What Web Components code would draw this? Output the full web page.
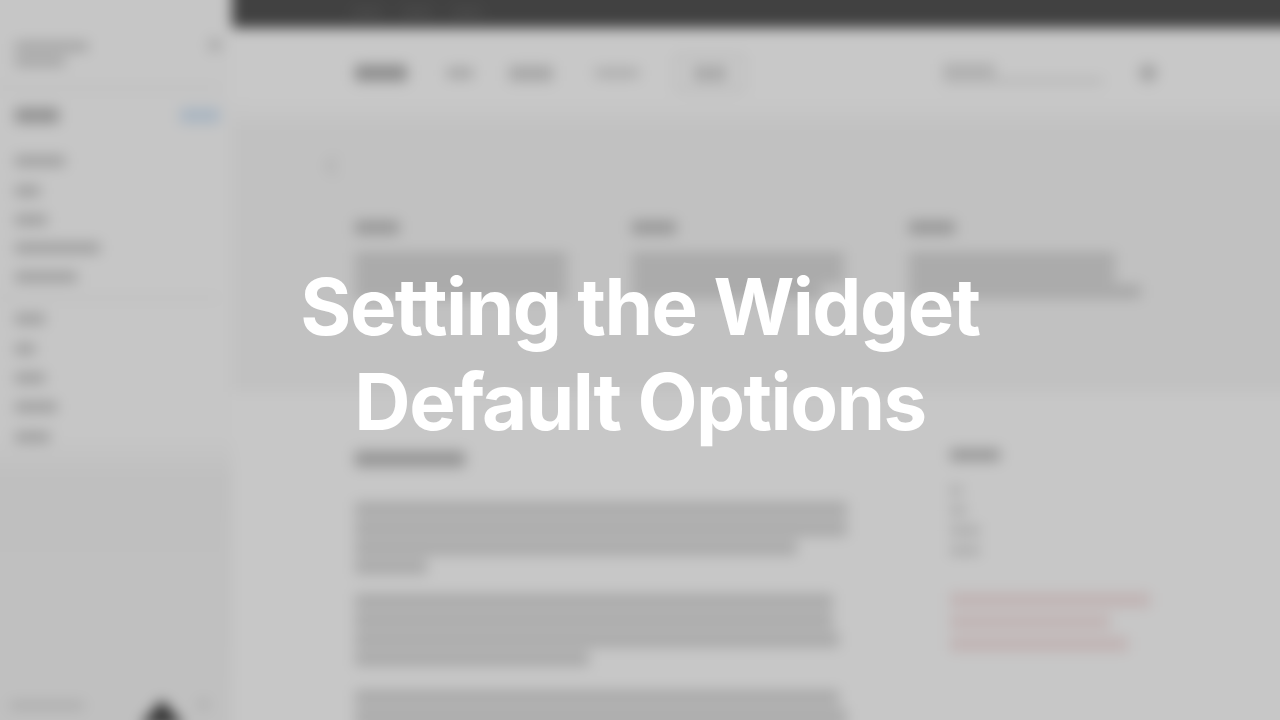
<!DOCTYPE html>
<html lang="en">
<head>
<meta charset="utf-8">
<title>Setting the Widget Default Options</title>
<style>
    html, body { margin: 0; height: 100%; background: #c6c6c6; overflow: hidden; }
</style>
</head>
<body>
<video-frame>
    <!-- Bleed of 24px on the top, left and right so the blur doesn't fade at the window edge -->
    <app-sidebar slot="page">
        <sk-bar w="73" h="9" c="#a0a0a0" mt="66"></sk-bar>
        <sk-bar w="50" h="9" c="#a0a0a0" mt="6"></sk-bar>
        <sk-rule mt="21"></sk-rule>
        <sk-row mt="19">
            <sk-bar w="44" h="15" c="#929292"></sk-bar>
            <sk-bar w="40" h="15" c="#a9b5c1"></sk-bar>
        </sk-row>
        <sk-bar w="50" h="10" c="#9c9c9c" mt="33"></sk-bar>
        <sk-bar w="25" h="10" c="#9c9c9c" mt="20"></sk-bar>
        <sk-bar w="32" h="10" c="#9c9c9c" mt="19"></sk-bar>
        <sk-bar w="85" h="10" c="#9c9c9c" mt="18"></sk-bar>
        <sk-bar w="62" h="10" c="#9c9c9c" mt="19"></sk-bar>
        <sk-rule mt="15"></sk-rule>
        <sk-bar w="30" h="10" c="#9c9c9c" mt="15"></sk-bar>
        <sk-bar w="20" h="10" c="#9c9c9c" mt="20"></sk-bar>
        <sk-bar w="30" h="10" c="#9c9c9c" mt="19"></sk-bar>
        <sk-bar w="42" h="10" c="#9c9c9c" mt="19"></sk-bar>
        <sk-bar w="35" h="10" c="#9c9c9c" mt="20"></sk-bar>
    </app-sidebar>

    <main-column slot="page">
        <top-bar></top-bar>
        <site-header>
            <sk-bar w="52" h="16" c="#8c8c8c"></sk-bar>
            <sk-bar w="26" h="10" c="#a2a2a2" ml="40"></sk-bar>
            <sk-bar w="44" h="15" c="#a6a6a6" ml="36"></sk-bar>
            <sk-bar w="44" h="10" c="#acacac" ml="42"></sk-bar>
            <outline-button></outline-button>
            <search-box></search-box>
        </site-header>
        <hero-steps>
            <step-col><sk-bar w="44" h="13" c="#969696"></sk-bar><text-lines widths="212 212 212" c="#a6a6a6" h="13" gap="3"></text-lines></step-col>
            <step-col><sk-bar w="44" h="13" c="#969696"></sk-bar><text-lines widths="212 212 190" c="#a6a6a6" h="13" gap="3"></text-lines></step-col>
            <step-col><sk-bar w="46" h="13" c="#969696"></sk-bar><text-lines widths="206 206 232" c="#a6a6a6" h="13" gap="3"></text-lines></step-col>
        </hero-steps>
        <article-body>
            <article-main>
                <sk-bar w="110" h="16" c="#959595"></sk-bar>
                <text-lines widths="492 492 442 72" c="#a9a9a9" mt="35" h="15" gap="4"></text-lines>
                <text-lines widths="478 478 484 234" c="#a9a9a9" mt="20" h="15" gap="4"></text-lines>
                <text-lines widths="484 492 492" c="#a9a9a9" mt="24" h="15" gap="4"></text-lines>
            </article-main>
            <article-side>
                <sk-bar w="50" h="12" c="#969696"></sk-bar>
                <sk-bar w="12" h="9" c="#aaaaaa" mt="25"></sk-bar>
                <sk-bar w="16" h="9" c="#aaaaaa" mt="11"></sk-bar>
                <sk-bar w="30" h="9" c="#aaaaaa" mt="11"></sk-bar>
                <sk-bar w="30" h="9" c="#aaaaaa" mt="11"></sk-bar>
                <text-lines widths="200 160 178" c="#c0b2b2" mt="38" h="14" gap="8"></text-lines>
            </article-side>
        </article-body>
    </main-column>

    <span slot="title">Setting the Widget<br>Default Options</span>
</video-frame>

<script>
// Small helper: custom element with its own shadow root from a css + html string
function shadow(el, css, html) {
    el.attachShadow({mode: "open"}).innerHTML = `<style>${css}</style>${html}`;
}

class VideoFrame extends HTMLElement {
    constructor() {
        super();
        shadow(this, `
            :host { display: block; position: relative; width: 1280px; height: 720px; overflow: hidden; }
            .page {
                display: grid;
                grid-template-columns: 256px 1fr;
                width: 1328px;
                height: 768px;
                margin: -24px;
                filter: blur(7px);
            }
            .title {
                position: absolute;
                inset: 0;
                display: flex;
                align-items: center;
                justify-content: center;
                padding-bottom: 12px;
                box-sizing: border-box;
                color: #fff;
                font: 700 78px/95px Inter, "Liberation Sans", sans-serif;
                letter-spacing: -1.55px;
                text-align: center;
            }
        `, `<div class="page"><slot name="page"></slot></div><div class="title"><slot name="title"></slot></div>`);
    }
}

class AppSidebar extends HTMLElement {
    constructor() {
        super();
        shadow(this, `
            :host {
                display: block;
                padding: 0 12px 0 39px;
                background: linear-gradient(#c6c6c6 0, #c6c6c6 460px, #bfbfbf 500px, #c0c0c0 100%);
                position: relative;
            }
            .dot { position: absolute; left: 232px; top: 62px; width: 14px; height: 14px; border-radius: 50%; background: #aaa; }
            .foot { position: absolute; left: 34px; right: 12px; top: 724px; display: flex; align-items: center; height: 10px; }
            .foot i { background: #a8a8a8; height: 7px; width: 74px; }
            .tri { position: absolute; left: 130px; top: 0; border: 22px solid transparent; border-bottom: 26px solid #2e2e2e; border-top: 0; }
            .end { position: absolute; right: 12px; top: 0; width: 9px; height: 9px; background: #a4a4a4; border-radius: 50%; }
        `, `<span class="dot"></span><slot></slot><div class="foot"><i></i><span class="tri"></span><span class="end"></span></div>`);
    }
}

class MainColumn extends HTMLElement {
    constructor() {
        super();
        shadow(this, `:host { display: flex; flex-direction: column; background: #c7c7c7; min-width: 0; }`, `<slot></slot>`);
    }
}

class TopBar extends HTMLElement {
    constructor() {
        super();
        shadow(this, `
            :host { display: flex; align-items: center; gap: 20px; height: 52px; padding: 20px 0 0 120px; box-sizing: border-box; background: #414141; flex: none; }
            i { display: block; width: 30px; height: 4px; background: #555; }
        `, `<i></i><i></i><i></i>`);
    }
}

class SiteHeader extends HTMLElement {
    constructor() {
        super();
        shadow(this, `
            :host { display: flex; align-items: center; height: 96px; padding: 0 0 6px 123px; box-sizing: border-box; flex: none;
                background: linear-gradient(#c8c8c8 0, #c8c8c8 70px, #c3c3c3 96px); }
        `, `<slot></slot>`);
    }
}

class OutlineButton extends HTMLElement {
    constructor() {
        super();
        shadow(this, `
            :host { display: flex; align-items: center; justify-content: center; width: 68px; height: 36px; margin-left: 37px; border: 2px solid #acacac; border-radius: 4px; box-sizing: border-box; }
            i { display: block; width: 34px; height: 15px; background: #a8a8a8; }
        `, `<i></i>`);
    }
}

class SearchBox extends HTMLElement {
    constructor() {
        super();
        shadow(this, `
            :host { display: flex; align-items: center; margin-left: 199px; }
            .field { width: 160px; height: 19px; position: relative; }
            .field i { position: absolute; left: 0; top: 0; width: 52px; height: 13px; background: #aeaeae; }
            .field b { position: absolute; left: 0; right: 0; bottom: 0; height: 4px; background: #acacac; }
            .btn { width: 18px; height: 18px; margin-left: 36px; border-radius: 50%; background: #a2a2a2; }
        `, `<div class="field"><i></i><b></b></div><div class="btn"></div>`);
    }
}

class HeroSteps extends HTMLElement {
    constructor() {
        super();
        shadow(this, `
            :host { display: flex; gap: 65px; height: 268px; padding: 97px 0 0 123px; box-sizing: border-box; background: #c1c1c1; position: relative; flex: none; }
            .back { position: absolute; left: 96px; top: 35px; width: 11px; height: 11px; border-left: 3px solid #a8a8a8; border-bottom: 3px solid #a8a8a8; transform: rotate(45deg); }
        `, `<span class="back"></span><slot></slot>`);
    }
}

class StepCol extends HTMLElement {
    constructor() {
        super();
        shadow(this, `:host { display: flex; flex-direction: column; gap: 19px; width: 212px; }`, `<slot></slot>`);
    }
}

class ArticleBody extends HTMLElement {
    constructor() {
        super();
        shadow(this, `:host { display: flex; padding: 59px 0 0 123px; }`, `<slot></slot>`);
    }
}

class ArticleMain extends HTMLElement {
    constructor() {
        super();
        shadow(this, `:host { display: block; width: 595px; flex: none; }`, `<slot></slot>`);
    }
}

class ArticleSide extends HTMLElement {
    constructor() {
        super();
        shadow(this, `:host { display: block; width: 210px; margin-top: -2px; }`, `<slot></slot>`);
    }
}

// A blurred-out piece of text in the background
class SkBar extends HTMLElement {
    connectedCallback() {
        if (this.shadowRoot) return;
        let a = (n, d) => this.getAttribute(n) || d;
        shadow(this, `:host {
            display: block; flex: none;
            width: ${a("w", 40)}px; height: ${a("h", 8)}px;
            margin-top: ${a("mt", 0)}px; margin-left: ${a("ml", 0)}px;
            background: ${a("c", "#aaa")};
        }`, ``);
    }
}

class SkRow extends HTMLElement {
    connectedCallback() {
        if (this.shadowRoot) return;
        shadow(this, `:host { display: flex; justify-content: space-between; margin-top: ${this.getAttribute("mt") || 0}px; }`, `<slot></slot>`);
    }
}

class SkRule extends HTMLElement {
    connectedCallback() {
        if (this.shadowRoot) return;
        shadow(this, `:host { display: block; height: 2px; margin: ${this.getAttribute("mt") || 0}px 0 0 -24px; background: #b8b8b8; }`, ``);
    }
}

// Paragraph of blurred lines, one bar per width
class TextLines extends HTMLElement {
    connectedCallback() {
        if (this.shadowRoot) return;
        let lines = this.getAttribute("widths").split(" ");
        let bars = lines.map((w) => `<i style="width:${w}px"></i>`).join("");
        let h = this.getAttribute("h") || 11;
        let gap = this.getAttribute("gap") || 6;
        shadow(this, `
            :host { display: flex; flex-direction: column; gap: ${gap}px; margin-top: ${this.getAttribute("mt") || 0}px; }
            i { display: block; height: ${h}px; background: ${this.getAttribute("c")}; }
        `, bars);
    }
}

customElements.define("video-frame", VideoFrame);
customElements.define("app-sidebar", AppSidebar);
customElements.define("main-column", MainColumn);
customElements.define("top-bar", TopBar);
customElements.define("site-header", SiteHeader);
customElements.define("outline-button", OutlineButton);
customElements.define("search-box", SearchBox);
customElements.define("hero-steps", HeroSteps);
customElements.define("step-col", StepCol);
customElements.define("article-body", ArticleBody);
customElements.define("article-main", ArticleMain);
customElements.define("article-side", ArticleSide);
customElements.define("sk-bar", SkBar);
customElements.define("sk-row", SkRow);
customElements.define("sk-rule", SkRule);
customElements.define("text-lines", TextLines);
</script>
</body>
</html>
